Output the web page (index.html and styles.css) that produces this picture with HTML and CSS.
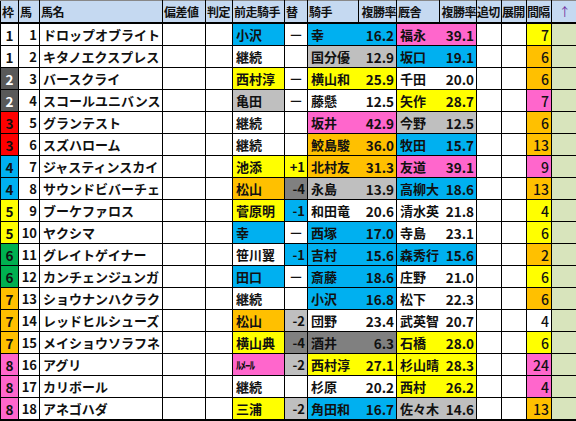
FILE: index.html
```html
<!DOCTYPE html>
<html lang="ja">
<head>
<meta charset="utf-8">
<link rel="stylesheet" href="styles.css">
</head>
<body>
<table class="sheet">
<colgroup>
<col class="c-waku"><col class="c-uma"><col class="c-name"><col class="c-dev"><col class="c-judge"><col class="c-prev"><col class="c-chg"><col class="c-jk"><col class="c-jkr"><col class="c-tr"><col class="c-trr"><col class="c-oi"><col class="c-ten"><col class="c-int"><col class="c-up">
</colgroup>
<thead>
<tr>
<th>枠</th><th>馬</th><th>馬名</th><th>偏差値</th><th>判定</th><th>前走騎手</th><th>替</th><th>騎手</th><th class="r">複勝率</th><th>厩舎</th><th class="r">複勝率</th><th class="tight">追切</th><th class="tight">展開</th><th class="tight">間隔</th><th class="up">↑</th>
</tr>
</thead>
<tbody>
<tr><td class="w w1">1</td><td class="u">1</td><td class="n">ドロップオブライト</td><td></td><td></td><td class="p bl">小沢</td><td class="ch">ー</td><td class="jk bl">幸</td><td class="rt bl">16.2</td><td class="jk pk">福永</td><td class="rt pk">39.1</td><td></td><td></td><td class="iv ye">7</td><td class="lg"></td></tr>
<tr><td class="w w1">1</td><td class="u">2</td><td class="n">キタノエクスプレス</td><td></td><td></td><td class="p">継続</td><td class="ch"></td><td class="jk gy">国分優</td><td class="rt gy">12.9</td><td class="jk bl">坂口</td><td class="rt bl">19.1</td><td></td><td></td><td class="iv or">6</td><td class="lg"></td></tr>
<tr><td class="w w2">2</td><td class="u">3</td><td class="n">バースクライ</td><td></td><td></td><td class="p ye">西村淳</td><td class="ch">ー</td><td class="jk ye">横山和</td><td class="rt ye">25.9</td><td class="jk">千田</td><td class="rt">20.0</td><td></td><td></td><td class="iv or">6</td><td class="lg"></td></tr>
<tr><td class="w w2">2</td><td class="u">4</td><td class="n">スコールユニバンス</td><td></td><td></td><td class="p gy">亀田</td><td class="ch">ー</td><td class="jk">藤懸</td><td class="rt">12.5</td><td class="jk ye">矢作</td><td class="rt ye">28.7</td><td></td><td></td><td class="iv pk">7</td><td class="lg"></td></tr>
<tr><td class="w w3">3</td><td class="u">5</td><td class="n">グランテスト</td><td></td><td></td><td class="p">継続</td><td class="ch"></td><td class="jk pk">坂井</td><td class="rt pk">42.9</td><td class="jk gy">今野</td><td class="rt gy">12.5</td><td></td><td></td><td class="iv or">6</td><td class="lg"></td></tr>
<tr><td class="w w3">3</td><td class="u">6</td><td class="n">スズハローム</td><td></td><td></td><td class="p">継続</td><td class="ch"></td><td class="jk or">鮫島駿</td><td class="rt or">36.0</td><td class="jk bl">牧田</td><td class="rt bl">15.7</td><td></td><td></td><td class="iv or">13</td><td class="lg"></td></tr>
<tr><td class="w w4">4</td><td class="u">7</td><td class="n">ジャスティンスカイ</td><td></td><td></td><td class="p ye">池添</td><td class="ch num ye">+1</td><td class="jk or">北村友</td><td class="rt or">31.3</td><td class="jk pk">友道</td><td class="rt pk">39.1</td><td></td><td></td><td class="iv pk">9</td><td class="lg"></td></tr>
<tr><td class="w w4">4</td><td class="u">8</td><td class="n">サウンドビバーチェ</td><td></td><td></td><td class="p or">松山</td><td class="ch num dg">-4</td><td class="jk gy">永島</td><td class="rt gy">13.9</td><td class="jk bl">高柳大</td><td class="rt bl">18.6</td><td></td><td></td><td class="iv or">13</td><td class="lg"></td></tr>
<tr><td class="w w5">5</td><td class="u">9</td><td class="n">ブーケファロス</td><td></td><td></td><td class="p ye">菅原明</td><td class="ch num bl">-1</td><td class="jk">和田竜</td><td class="rt">20.6</td><td class="jk">清水英</td><td class="rt">21.8</td><td></td><td></td><td class="iv ye">4</td><td class="lg"></td></tr>
<tr><td class="w w5">5</td><td class="u">10</td><td class="n">ヤクシマ</td><td></td><td></td><td class="p bl">幸</td><td class="ch">ー</td><td class="jk bl">西塚</td><td class="rt bl">17.0</td><td class="jk">寺島</td><td class="rt">23.1</td><td></td><td></td><td class="iv ye">6</td><td class="lg"></td></tr>
<tr><td class="w w6">6</td><td class="u">11</td><td class="n">グレイトゲイナー</td><td></td><td></td><td class="p">笹川翼</td><td class="ch num bl">-1</td><td class="jk bl">吉村</td><td class="rt bl">15.6</td><td class="jk bl">森秀行</td><td class="rt bl">15.6</td><td></td><td></td><td class="iv or">2</td><td class="lg"></td></tr>
<tr><td class="w w6">6</td><td class="u">12</td><td class="n">カンチェンジュンガ</td><td></td><td></td><td class="p bl">田口</td><td class="ch">ー</td><td class="jk bl">斎藤</td><td class="rt bl">18.6</td><td class="jk">庄野</td><td class="rt">21.0</td><td></td><td></td><td class="iv ye">6</td><td class="lg"></td></tr>
<tr><td class="w w7">7</td><td class="u">13</td><td class="n">ショウナンハクラク</td><td></td><td></td><td class="p">継続</td><td class="ch"></td><td class="jk bl">小沢</td><td class="rt bl">16.8</td><td class="jk">松下</td><td class="rt">22.3</td><td></td><td></td><td class="iv or">6</td><td class="lg"></td></tr>
<tr><td class="w w7">7</td><td class="u">14</td><td class="n">レッドヒルシューズ</td><td></td><td></td><td class="p or">松山</td><td class="ch num gy">-2</td><td class="jk">団野</td><td class="rt">23.4</td><td class="jk">武英智</td><td class="rt">20.7</td><td></td><td></td><td class="iv">4</td><td class="lg"></td></tr>
<tr><td class="w w7">7</td><td class="u">15</td><td class="n">メイショウソラフネ</td><td></td><td></td><td class="p ye">横山典</td><td class="ch num dg">-4</td><td class="jk dg">酒井</td><td class="rt dg">6.3</td><td class="jk ye">石橋</td><td class="rt ye">28.0</td><td></td><td></td><td class="iv ye">6</td><td class="lg"></td></tr>
<tr><td class="w w8">8</td><td class="u">16</td><td class="n">アグリ</td><td></td><td></td><td class="p pk hw">ﾙﾒｰﾙ</td><td class="ch num gy">-2</td><td class="jk ye">西村淳</td><td class="rt ye">27.1</td><td class="jk ye">杉山晴</td><td class="rt ye">28.3</td><td></td><td></td><td class="iv pk">24</td><td class="lg"></td></tr>
<tr><td class="w w8">8</td><td class="u">17</td><td class="n">カリボール</td><td></td><td></td><td class="p">継続</td><td class="ch"></td><td class="jk">杉原</td><td class="rt">20.2</td><td class="jk ye">西村</td><td class="rt ye">26.2</td><td></td><td></td><td class="iv pk">4</td><td class="lg"></td></tr>
<tr><td class="w w8">8</td><td class="u">18</td><td class="n">アネゴハダ</td><td></td><td></td><td class="p ye">三浦</td><td class="ch num gy">-2</td><td class="jk bl">角田和</td><td class="rt bl">16.7</td><td class="jk gy">佐々木</td><td class="rt gy">14.6</td><td></td><td></td><td class="iv or">13</td><td class="lg"></td></tr>
</tbody>
</table>
</body>
</html>
```
FILE: styles.css
```css
html, body {
  margin: 0;
  padding: 0;
  background: #ffffff;
}

.sheet {
  border-collapse: collapse;
  table-layout: fixed;
  width: 576px;
  font-family: "Noto Sans CJK JP", "Noto Sans", sans-serif;
  font-weight: 700;
  font-size: 13px;
  color: #111;
}

.c-waku { width: 18px; }
.c-uma { width: 21px; }
.c-name { width: 123px; }
.c-dev { width: 43px; }
.c-judge { width: 27px; }
.c-prev { width: 52px; }
.c-chg { width: 23px; }
.c-jk { width: 51px; }
.c-jkr { width: 38px; }
.c-tr { width: 43px; }
.c-trr { width: 37px; }
.c-oi { width: 25px; }
.c-ten { width: 25px; }
.c-int { width: 25px; }
.c-up { width: 25px; }

.sheet th,
.sheet td {
  border: 1px solid #000;
  padding: 0 2px;
  height: 21px;
  line-height: 20px;
  white-space: nowrap;
  overflow: hidden;
  text-align: left;
}

.sheet th {
  background: #c5d9f1;
  font-size: 12px;
  letter-spacing: -0.5px;
  padding: 0 0 0 1px;
  border-bottom: 2px solid #000;
  border-top: 1px solid #888;
}

.sheet th.tight {
  letter-spacing: -0.8px;
  padding: 0;
}

.sheet tbody tr:last-child td {
  border-bottom: 2px solid #000;
}

.sheet th.r { text-align: right; }
.sheet th.up {
  color: #7030a0;
  text-align: center;
  font-weight: 400;
}

.w { text-align: center !important; font-size: 13.5px; }
.w1 { background: #ffffff; }
.w2 { background: #595959; color: #ffffff; }
.w3 { background: #ff0000; }
.w4 { background: #00b0f0; }
.w5 { background: #ffff00; }
.w6 { background: #00b050; }
.w7 { background: #ffc000; }
.w8 { background: #ff66cc; }

.u { text-align: right !important; }
.n { padding-left: 3px !important; }
.p { padding-left: 3px !important; }
.hw { font-size: 11px; letter-spacing: -1px; }

.ch { text-align: center !important; font-weight: 400; }
.ch.num { text-align: right !important; font-weight: 700; }

.jk {
  border-right-style: hidden !important;
  padding-left: 3px !important;
}
.rt {
  text-align: right !important;
  border-left-style: hidden !important;
  font-size: 13.5px;
}

.iv { text-align: right !important; font-size: 14px; font-weight: 500; }

.bl { background: #00b0f0; }
.gy { background: #bfbfbf; }
.dg { background: #808080; }
.ye { background: #ffff00; }
.or { background: #ffc000; }
.pk { background: #ff66cc; }
.lg { background: #d8e4bc; }
```
